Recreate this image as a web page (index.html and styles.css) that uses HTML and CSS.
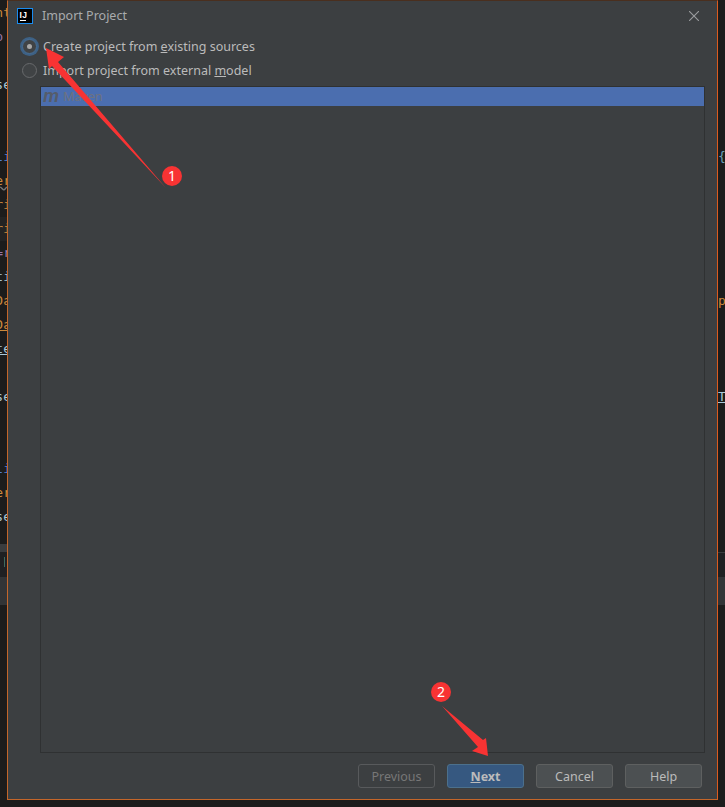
FILE: index.html
```html
<!DOCTYPE html>
<html lang="en">
	<head>
		<meta charset="UTF-8" />
		<title>Import Project</title>
		<link rel="stylesheet" href="styles.css">
	</head>
	<body>
		<div class="desktop">
			<div class="editor editor-left">
				<div class="code-lines">
					<span class="orange">nt</span>
					<span class="purple">p&nbsp;</span>
					<span>&nbsp;</span>
					<span class="pale">se</span>
					<span>&nbsp;</span>
					<span>&nbsp;</span>
					<span class="blue">li</span>
					<span class="orange wavy">er</span>
					<span class="orange">ri</span>
					<span class="orange current">ri</span>
					<span class="purple">=r</span>
					<span class="pale">ti</span>
					<span class="orange">Da</span>
					<span class="orange under">Da</span>
					<span class="pale under">te</span>
					<span>&nbsp;</span>
					<span class="pale">se</span>
					<span>&nbsp;</span>
					<span>&nbsp;</span>
					<span class="blue">li</span>
					<span class="orange">er</span>
					<span class="pale">se</span>
				</div>
				<div class="editor-bottom">
					<div class="tool-tab"></div>
					<div class="tool-strip"><i></i></div>
					<div class="tool-fill"></div>
				</div>
			</div>
			<main class="dialog">
				<header class="titlebar">
					<svg class="app-icon" width="16" height="16" viewBox="0 0 16 16">
						<rect x="0.5" y="0.5" width="15" height="15" fill="#000" stroke="#1a8cf0" />
						<rect x="3" y="12" width="6" height="1" fill="#fff" />
						<text x="2.5" y="9.5" class="app-icon-text">IJ</text>
					</svg>
					<span class="title">Import Project</span>
					<svg class="close" width="10" height="10" viewBox="0 0 10 10">
						<path d="M0 0 L10 10 M10 0 L0 10" stroke="#9a9c9e" stroke-width="1.1" />
					</svg>
				</header>
				<div class="options">
					<label class="option">
						<span class="radio checked"></span>
						<span>Create project from <u>e</u>xisting sources</span>
					</label>
					<label class="option">
						<span class="radio"></span>
						<span>Import project from external <u>m</u>odel</span>
					</label>
				</div>
				<div class="list">
					<div class="list-row">
						<span class="maven-icon">m</span>
						<span class="maven-name">Maven</span>
					</div>
				</div>
				<footer class="buttons">
					<button class="btn disabled">Previous</button>
					<button class="btn primary"><u>N</u>ext</button>
					<button class="btn">Cancel</button>
					<button class="btn">Help</button>
				</footer>
			</main>
			<div class="editor editor-right">
				<div class="code-lines">
					<span>&nbsp;</span>
					<span>&nbsp;</span>
					<span>&nbsp;</span>
					<span>&nbsp;</span>
					<span>&nbsp;</span>
					<span>&nbsp;</span>
					<span class="teal">{</span>
					<span>&nbsp;</span>
					<span>&nbsp;</span>
					<span>&nbsp;</span>
					<span>&nbsp;</span>
					<span>&nbsp;</span>
					<span class="orange">pu</span>
					<span>&nbsp;</span>
					<span>&nbsp;</span>
					<span>&nbsp;</span>
					<span class="pale under">T:</span>
				</div>
				<div class="editor-bottom">
					<div class="tool-tab tool-tab-off"></div>
					<div class="tool-strip"></div>
					<div class="tool-fill"></div>
				</div>
			</div>
		</div>

		<svg class="annotations" width="725" height="807" viewBox="0 0 725 807">
			<path d="M46 48 L64 57 L58 62 L166 188 L52 66 L49 69 Z" fill="#f83333" />
			<path d="M442 706 L483 740 L486 738 L488 756 L472 751 L478 747 Z" fill="#f83333" />
			<circle cx="172" cy="176" r="10" fill="#f83333" />
			<circle cx="441" cy="692" r="10" fill="#f83333" />
			<text x="172" y="181" class="badge">1</text>
			<text x="441" y="697" class="badge">2</text>
		</svg>
	</body>
</html>
```
FILE: styles.css
```css
html,
body {
	margin: 0;
	height: 100%;
	background-color: #1c1c1c;
	overflow: hidden;
}
.desktop {
	display: flex;
	width: 725px;
	height: 807px;
}
.editor {
	display: flex;
	flex-direction: column;
	overflow: hidden;
	flex: none;
	width: 7px;
	font-family: "DejaVu Sans Mono", monospace;
	font-size: 13px;
}
.code-lines {
	display: flex;
	flex-direction: column;
	height: 544px;
	padding-top: 1px;
	box-sizing: border-box;
	line-height: 24px;
	color: #a9b7c6;
	white-space: pre;
}
.code-lines span {
	display: flex;
	height: 24px;
}
/* left gutter shows the end of each line, cut on both sides */
.editor-left .code-lines span {
	justify-content: flex-end;
	margin-right: -4px;
}
.orange {
	color: #cc8a3c;
}
.purple {
	color: #9876aa;
}
.pale {
	color: #a9c7d6;
}
.blue {
	color: #4d7fd6;
}
.teal {
	color: #6aa0b8;
}
.under {
	text-decoration: underline;
}
.wavy {
	text-decoration: underline wavy #777;
}
.code-lines .current {
	background-color: #232323;
}
.editor-bottom {
	display: flex;
	flex-direction: column;
	flex: 1;
}
.tool-tab {
	height: 8px;
	flex: none;
	background-color: #3a3c3e;
}
.tool-tab-off {
	height: 9px;
	box-sizing: border-box;
	background-color: #1c1c1c;
	border-bottom: 1px solid #3a3c3e;
}
.tool-strip {
	height: 25px;
	flex: none;
	background-color: #1f2022;
	display: flex;
	align-items: center;
}
.editor-right .tool-strip {
	height: 24px;
}
.tool-strip i {
	display: block;
	width: 1px;
	height: 10px;
	margin: 0 0 5px 4px;
	background-color: #3f6a5e;
}
.tool-fill {
	height: 28px;
	flex: none;
	background-color: #323436;
}

.dialog {
	display: flex;
	flex-direction: column;
	flex: none;
	width: 711px;
	height: 800px;
	box-sizing: border-box;
	background-color: #3c3f41;
	border: 1px solid #c4662a;
	border-right-color: #dc5a1e;
	border-top-color: #4a2f1e;
	color: #bbbbbb;
	font-family: "Noto Sans", sans-serif;
	font-size: 12.5px;
}
.titlebar {
	display: flex;
	align-items: center;
	height: 29px;
	flex: none;
	padding: 0 18px 0 9px;
}
.app-icon {
	flex: none;
}
.app-icon-text {
	fill: #fff;
	font-family: "Liberation Sans", sans-serif;
	font-size: 8.5px;
	font-weight: 700;
	letter-spacing: 0.5px;
}
.title {
	margin-left: 9px;
	flex: 1;
	color: #a9abad;
}
.options {
	display: flex;
	flex-direction: column;
	padding: 4px 0 0 14px;
}
.option {
	display: flex;
	align-items: center;
	gap: 6px;
	height: 24px;
}
.radio {
	width: 15px;
	height: 15px;
	border-radius: 50%;
	box-sizing: border-box;
	background-color: #404345;
	border: 1px solid #686a6c;
	display: flex;
	align-items: center;
	justify-content: center;
	flex: none;
}
.radio.checked {
	border-color: #466d94;
	box-shadow: 0 0 0 2px #3d6185;
}
.radio.checked::after {
	content: "";
	width: 5px;
	height: 5px;
	border-radius: 50%;
	background-color: #a7a7a7;
}
.list {
	margin: 4px 12px 0 32px;
	height: 667px;
	flex: none;
	box-sizing: border-box;
	border: 1px solid #2f3132;
}
.list-row {
	display: flex;
	align-items: center;
	height: 19px;
	background-color: #4b6eaf;
	padding-left: 2px;
	gap: 4px;
}
.maven-icon {
	font-family: "Liberation Sans", sans-serif;
	font-weight: 700;
	font-style: italic;
	font-size: 18px;
	line-height: 19px;
	color: #555c6a;
}
.maven-name {
	color: #6e7280;
}
.buttons {
	display: flex;
	justify-content: flex-end;
	gap: 12px;
	padding: 11px 15px 0 0;
}
.btn {
	width: 77px;
	height: 24px;
	padding: 0;
	box-sizing: border-box;
	border: 1px solid #5e6060;
	border-radius: 3px;
	background-color: #4c5052;
	color: #bbbbbb;
	font-family: "Noto Sans", sans-serif;
	font-size: 12.5px;
}
.btn.disabled {
	background-color: #3c3f41;
	border-color: #585a5c;
	color: #777777;
}
.btn.primary {
	background-color: #365880;
	border-color: #4c708c;
	color: #bbbbbb;
	font-weight: 700;
}

.annotations {
	position: absolute;
	left: 0;
	top: 0;
	pointer-events: none;
}
.badge {
	fill: #fff;
	font-family: "Noto Sans", sans-serif;
	font-size: 14px;
	text-anchor: middle;
}
```
